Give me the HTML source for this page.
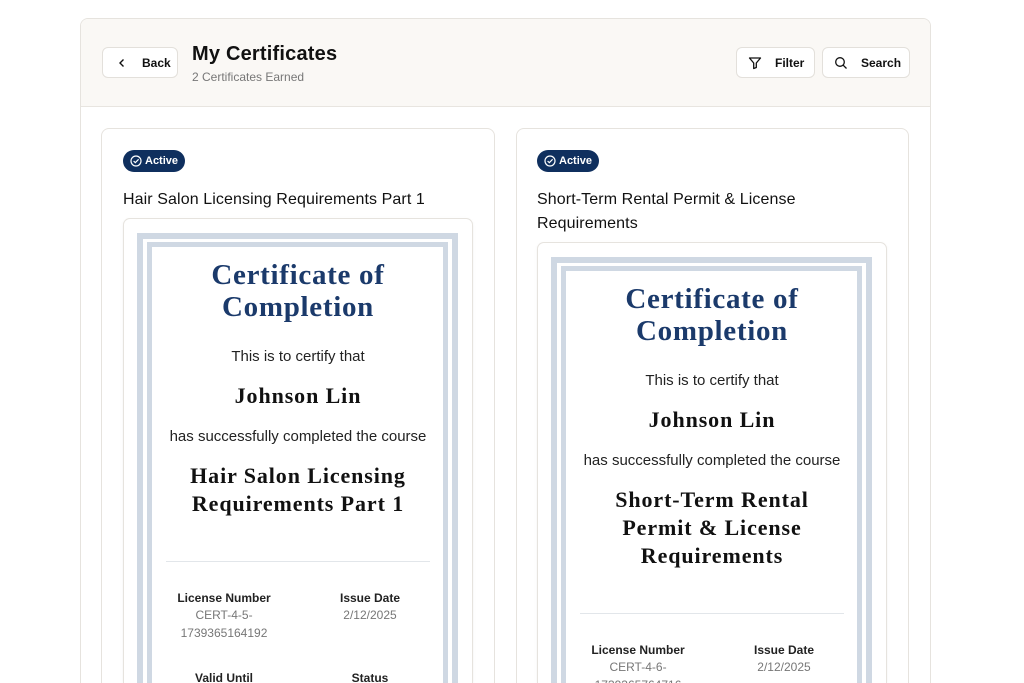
<!DOCTYPE html>
<html style="overflow:hidden;height:683px"><head><meta charset="utf-8"><style>
*{margin:0;padding:0;box-sizing:border-box}
html,body{overflow:hidden}
body{width:1024px;height:683px;background:#fff;font-family:"Liberation Sans",sans-serif;position:relative;color:#111}
.a{position:absolute}
.wrap{left:80px;top:18px;width:851px;height:665px;border:1px solid #e6e3de;border-bottom:none;border-radius:8px 8px 0 0;overflow:hidden}
.hdr{left:0;top:0;width:851px;height:88px;background:#faf8f5;border-bottom:1px solid #e8e5e0}
.btn{background:#fff;border:1px solid #e3e0db;border-radius:6px;height:31px;font-size:12px;font-weight:bold;display:flex;align-items:center;color:#111}
.card{border:1px solid #e6e3de;border-bottom:none;border-radius:8px 8px 0 0;background:#fff;height:555px}
.badge{background:#0f2f5e;color:#fff;border-radius:11px;height:22px;width:62px;font-size:11px;font-weight:bold;display:flex;align-items:center;padding-left:7px;gap:3px}
.ttl{font-size:16px;line-height:24px;color:#111;letter-spacing:0.1px}
.cbox{border:1px solid #e6e3de;border-bottom:none;border-radius:7px 7px 0 0;background:#fff;box-shadow:0 1px 3px rgba(0,0,0,.05)}
.f1{border:6px solid #cfd8e3;border-bottom:none}
.f2{border:5px solid #cfd8e3;border-bottom:none}
.c{text-align:center;width:300px}
.ser{font-family:"Liberation Serif",serif;font-weight:bold}
.h{color:#1b3a6b;font-size:29px;line-height:32px;letter-spacing:0.7px}
.s{font-size:15px;color:#222}
.n{font-size:22px;line-height:28px;color:#111;letter-spacing:0.9px}
.lab{font-size:12px;font-weight:bold;color:#222;text-align:center;width:130px}
.val{font-size:12px;color:#777;text-align:center;width:130px;line-height:18px}
.sep{height:1px;background:#e2e6ea}
</style></head><body>
<div class="a wrap">
 <div class="a hdr"></div>
 <div class="a btn" style="left:21px;top:28px;width:76px;"><svg width="10" height="10" viewBox="0 0 10 10" style="margin-left:14px"><path d="M6.5 1.5L3 5l3.5 3.5" fill="none" stroke="#111" stroke-width="1.4"/></svg><span style="margin-left:15px">Back</span></div>
 <div class="a" style="left:111px;top:24px;font-size:20px;font-weight:bold;letter-spacing:0.2px">My Certificates</div>
 <div class="a" style="left:111px;top:51px;font-size:12px;color:#777;">2 Certificates Earned</div>
 <div class="a btn" style="left:655px;top:28px;width:79px;"><svg width="14" height="14" viewBox="0 0 14 14" style="margin-left:11px"><path d="M1.5 2h11L8.3 7v4.5L5.7 12.5V7z" fill="none" stroke="#111" stroke-width="1.3" stroke-linejoin="round"/></svg><span style="margin-left:13px">Filter</span></div>
 <div class="a btn" style="left:741px;top:28px;width:88px;"><svg width="14" height="14" viewBox="0 0 14 14" style="margin-left:11px"><circle cx="6" cy="6" r="4.3" fill="none" stroke="#111" stroke-width="1.3"/><path d="M9.2 9.2L12.5 12.5" stroke="#111" stroke-width="1.3"/></svg><span style="margin-left:13px">Search</span></div>
</div>

<!-- card 1 -->
<div class="a card" style="left:101px;top:128px;width:394px"></div>
<div class="a badge" style="left:123px;top:150px"><svg width="12" height="12" viewBox="0 0 12 12"><circle cx="6" cy="6" r="5" fill="none" stroke="#fff" stroke-width="1.2"/><path d="M3.6 6l1.7 1.7L8.6 4.3" fill="none" stroke="#fff" stroke-width="1.2"/></svg>Active</div>
<div class="a ttl" style="left:123px;top:188px">Hair Salon Licensing Requirements Part 1</div>
<div class="a cbox" style="left:123px;top:218px;width:350px;height:465px"></div>
<div class="a f1" style="left:137px;top:233px;width:321px;height:450px"></div>
<div class="a f2" style="left:147px;top:242px;width:301px;height:441px"></div>
<div class="a c ser h" style="left:148px;top:259px">Certificate of<br>Completion</div>
<div class="a c s" style="left:148px;top:348px">This is to certify that</div>
<div class="a c ser n" style="left:148px;top:382px">Johnson Lin</div>
<div class="a c s" style="left:148px;top:428px">has successfully completed the course</div>
<div class="a c ser n" style="left:148px;top:462px">Hair Salon Licensing<br>Requirements Part 1</div>
<div class="a sep" style="left:166px;top:561px;width:264px"></div>
<div class="a lab" style="left:159px;top:591px">License Number</div>
<div class="a val" style="left:159px;top:606px">CERT-4-5-<br>1739365164192</div>
<div class="a lab" style="left:305px;top:591px">Issue Date</div>
<div class="a val" style="left:305px;top:606px">2/12/2025</div>
<div class="a lab" style="left:159px;top:671px;height:12px;overflow:hidden">Valid Until</div>
<div class="a lab" style="left:305px;top:671px;height:12px;overflow:hidden">Status</div>

<!-- card 2 -->
<div class="a card" style="left:516px;top:128px;width:393px"></div>
<div class="a badge" style="left:537px;top:150px"><svg width="12" height="12" viewBox="0 0 12 12"><circle cx="6" cy="6" r="5" fill="none" stroke="#fff" stroke-width="1.2"/><path d="M3.6 6l1.7 1.7L8.6 4.3" fill="none" stroke="#fff" stroke-width="1.2"/></svg>Active</div>
<div class="a ttl" style="left:537px;top:188px">Short-Term Rental Permit &amp; License<br>Requirements</div>
<div class="a cbox" style="left:537px;top:242px;width:350px;height:441px"></div>
<div class="a f1" style="left:551px;top:257px;width:321px;height:426px"></div>
<div class="a f2" style="left:561px;top:266px;width:301px;height:417px"></div>
<div class="a c ser h" style="left:562px;top:283px">Certificate of<br>Completion</div>
<div class="a c s" style="left:562px;top:372px">This is to certify that</div>
<div class="a c ser n" style="left:562px;top:406px">Johnson Lin</div>
<div class="a c s" style="left:562px;top:452px">has successfully completed the course</div>
<div class="a c ser n" style="left:562px;top:486px">Short-Term Rental<br>Permit &amp; License<br>Requirements</div>
<div class="a sep" style="left:580px;top:613px;width:264px"></div>
<div class="a lab" style="left:573px;top:643px">License Number</div>
<div class="a val" style="left:573px;top:658px;height:25px;overflow:hidden">CERT-4-6-<br>1739365764716</div>
<div class="a lab" style="left:719px;top:643px">Issue Date</div>
<div class="a val" style="left:719px;top:658px">2/12/2025</div>
</body></html>
